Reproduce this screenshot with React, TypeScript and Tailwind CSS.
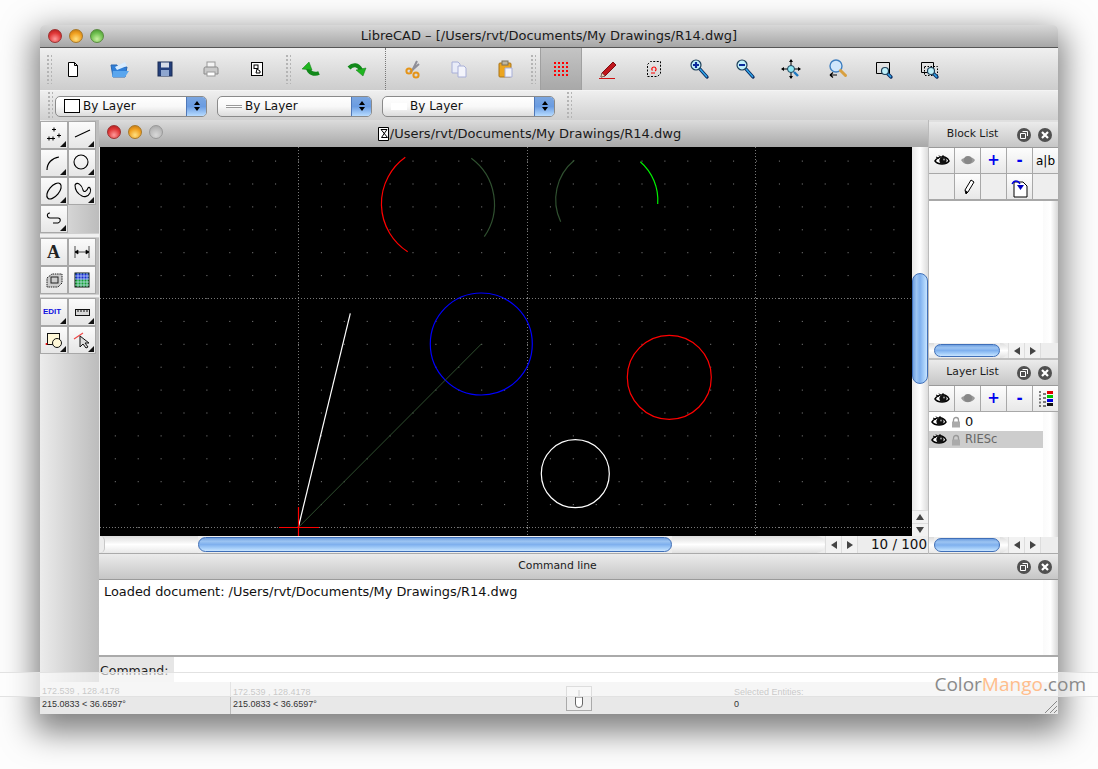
import React from "react";

const Svg = ({ size = 24, children }: { size?: number; children: React.ReactNode }) => (
  <svg width={size} height={size} viewBox={`0 0 ${size} ${size}`} fill="none" className="block">
    {children}
  </svg>
);

const Corner = () => <path d="M25 25h-6l6-6z" fill="#111" />;

const Lens = ({ cx = 9, cy = 8, r = 5, fill = "#bff0fa" }: { cx?: number; cy?: number; r?: number; fill?: string }) => (
  <g>
    <path d={`M${cx + r * 0.7} ${cy + r * 0.7}L20 20`} stroke="#0b2b60" strokeWidth="3.4" strokeLinecap="round" />
    <path d={`M${cx + r * 0.8} ${cy + r * 0.8}L19.6 19.6`} stroke="#2fa3e8" strokeWidth="1.5" strokeLinecap="round" />
    <circle cx={cx} cy={cy} r={r} fill={fill} stroke="#1d3f58" strokeWidth="1.2" />
  </g>
);

const toolIcons: Record<string, React.ReactNode> = {
  new: <path d="M7.5 5.5h6l3 3v11h-9z M13.5 5.5v3h3" fill="#fff" stroke="#000" />,
  open: (
    <g>
      <path d="M4 8h6l1 2h9l-2 10H6z" fill="#2f7fd8" stroke="#2a66b0" />
      <path d="M8 10l10-5 2 4-10 4z" fill="#d8ecff" />
      <path d="M6 14h16l-4 6H5z" fill="#5aa6ee" />
    </g>
  ),
  save: (
    <g>
      <rect x="5" y="5" width="14" height="14" fill="#24407c" stroke="#1a2c55" />
      <rect x="8" y="5.500" width="8" height="5" fill="#d6dce8" />
      <rect x="8" y="13" width="8" height="6" fill="#8ea6cf" />
    </g>
  ),
  print: (
    <g>
      <rect x="8" y="5" width="8" height="6" fill="#f4f4f4" stroke="#999" />
      <path d="M5 12c0-2 1-2 2-2h10c1 0 2 0 2 2v5H5z" fill="#c9c9c9" stroke="#8a8a8a" />
      <rect x="8" y="15" width="8" height="4" fill="#fff" stroke="#999" />
    </g>
  ),
  preview: (
    <g>
      <rect x="6.500" y="5.500" width="11" height="13" fill="#fff" stroke="#000" />
      <rect x="9" y="8" width="4" height="3.500" stroke="#000" fill="#fff" />
      <path d="M12 12l3 2v2h-4z" stroke="#000" fill="#fff" />
    </g>
  ),
  undo: (
    <g>
      <path d="M9 11c1 5 6 7 11 5" stroke="#11881a" strokeWidth="4" />
      <path d="M3 12l7-7 3 8z" fill="#1fb51f" stroke="#0e7a14" strokeWidth=".5" />
    </g>
  ),
  redo: (
    <g>
      <path d="M4 11c4-4 9-4 12 2" stroke="#11881a" strokeWidth="4" />
      <path d="M11 13l10-2-3 8z" fill="#1fb51f" stroke="#0e7a14" strokeWidth=".5" />
    </g>
  ),
  cut: (
    <g>
      <path d="M16 4l-5 10M18 7l-9 8" stroke="#8f8f98" strokeWidth="2" />
      <circle cx="8" cy="14" r="2.600" stroke="#e59418" strokeWidth="2" />
      <circle cx="15" cy="18" r="2.600" stroke="#e59418" strokeWidth="2" />
    </g>
  ),
  copy: (
    <g>
      <path d="M5 5h6l2 2v9H5z" fill="#e9ecf8" stroke="#a8afd8" />
      <path d="M11 9h6l2 2v9h-8z" fill="#f3f4fb" stroke="#a8afd8" />
    </g>
  ),
  paste: (
    <g>
      <rect x="6" y="6" width="12" height="14" rx="1" fill="#eca51f" stroke="#a8741a" />
      <rect x="9" y="4" width="6" height="4" fill="#bfb7a0" stroke="#7a705a" />
      <path d="M12 11h7v9h-7z" fill="#f2f3fa" stroke="#a8afd8" />
    </g>
  ),
  grid: (
    <g fill="#f00">
      {[6, 10, 14, 18].map((x) =>
        [6, 10, 14, 18].map((y) => <rect key={`${x}-${y}`} x={x - 1} y={y - 1} width="2" height="2" />)
      )}
    </g>
  ),
  draft: (
    <g>
      <path d="M7 16L18 5l3 3-11 11-4 1z" fill="#c0161c" stroke="#7c0d10" />
      <path d="M6 20l1-4 3 3z" fill="#f0d8b8" stroke="#555" strokeWidth=".5" />
      <path d="M4 21.500h16" stroke="#d01010" strokeWidth="1.200" />
    </g>
  ),
  redraw: (
    <g>
      <path d="M6.500 7.500l3-3h10v12l-3 3H6.500z" stroke="#000" strokeDasharray="2 1.500" />
      <path d="M14 14c2-1 1-4-1-4s-3 2-1.500 3.500M10 16h4" stroke="#f00" strokeWidth="1.200" />
    </g>
  ),
  zoomIn: (
    <g>
      <Lens />
      <path d="M6 8h6M9 5v6" stroke="#0a2a9c" strokeWidth="2.200" />
    </g>
  ),
  zoomOut: (
    <g>
      <Lens />
      <path d="M6 8h6" stroke="#0a2a9c" strokeWidth="2.200" />
    </g>
  ),
  zoomAuto: (
    <g>
      <path d="M12 3v18M3 12h18" stroke="#000" />
      <path d="M12 2l-2 3h4zM12 22l-2-3h4zM2 12l3-2v4zM22 12l-3-2v4z" fill="#000" />
      <circle cx="12" cy="12" r="3.500" fill="#8fe8f4" stroke="#1d3f58" />
      <path d="M15 15l4 4" stroke="#1c78c0" strokeWidth="2.400" />
    </g>
  ),
  zoomPrev: (
    <g>
      <circle cx="11" cy="9" r="6" fill="#cfe6fb" stroke="#3f7fc0" strokeWidth="1.400" />
      <path d="M15.500 13.500l5 5" stroke="#d8a040" strokeWidth="3" strokeLinecap="round" />
      <path d="M12 18H5M5 18l3-2.500M5 18l3 2.500" stroke="#000" strokeWidth="1.200" />
    </g>
  ),
  zoomWin: (
    <g>
      <path d="M5.500 5.500h13v11h-13z" stroke="#000" fill="none" />
      <Lens cx={14} cy={14} r={3.500} />
    </g>
  ),
  zoomPan: (
    <g>
      <path d="M4.500 5.500h12v10h-12z" stroke="#000" />
      <path d="M7.500 9.500h13v9h-13z" stroke="#000" strokeDasharray="1.500 1.500" />
      <Lens cx={14} cy={14} r={3.500} />
    </g>
  ),
};

const boxIcons: Record<string, React.ReactNode> = {
  point: (
    <g>
      {[[13, 7], [18, 13], [12, 16], [8, 16]].map(([x, y]) => (
        <path key={`${x}${y}`} d={`M${x - 2} ${y + 0.5}h4M${x} ${y - 1.5}v4`} stroke="#000" strokeWidth="1" />
      ))}
    </g>
  ),
  line: <path d="M6 15l15-7" stroke="#000" strokeWidth="1.100" />,
  arc: <path d="M6 20c0-7 5-12 12-13" stroke="#000" strokeWidth="1.200" />,
  circle: <circle cx="12" cy="12" r="7" stroke="#000" strokeWidth="1.100" />,
  ellipse: <ellipse cx="13" cy="13" rx="5" ry="9.500" transform="rotate(40 13 13)" stroke="#000" strokeWidth="1.200" />,
  spline: <path d="M6 7c2-4 7 0 8 5 1 3 4 1 5-2 1-2 4 1 2 5-2 4-6 4-8 3-4-2-7-5-7-11z" stroke="#000" strokeWidth="1.100" />,
  poly: <path d="M9 7c-4 0-3 5 0 5h8c3 0 3 4 0 5h-5" stroke="#000" strokeWidth="1.100" />,
  text: <text x="6" y="19" fontSize="18" fontWeight="700" fontFamily="'Liberation Serif',serif" fill="#222">A</text>,
  dim: <path d="M6 7v12M20 7v12M6 13h14M6 13l3-2v4zM20 13l-3-2v4z" stroke="#000" fill="#000" strokeWidth=".7" />,
  hatch: (
    <g>
      <path d="M6 11l5-4h10v9l-4 4H6z" fill="#ccc" stroke="#222" strokeDasharray="1.500 .8" />
      <rect x="10" y="10" width="7" height="6" stroke="#222" />
    </g>
  ),
  image: (
    <g>
      <rect x="6" y="6" width="14" height="14" fill="#16a030" stroke="#111" />
      <rect x="6.500" y="6.500" width="13" height="6" fill="#1a2ad0" />
      <path d="M9 6v14M12 6v14M15 6v14M18 6v14M6 9h14M6 12h14M6 15h14M6 18h14" stroke="#d0e8ff" strokeWidth=".7" />
    </g>
  ),
  edit: <text x="2" y="15" fontSize="8" fontWeight="700" fontFamily="'Liberation Sans',sans-serif" fill="#1010e0">EDIT</text>,
  measure: (
    <g>
      <rect x="6.500" y="10.500" width="14" height="6" fill="#d8d8d8" stroke="#111" />
      <path d="M9 11v2M12 11v2M15 11v2M18 11v2" stroke="#111" />
    </g>
  ),
  snap: (
    <g>
      <rect x="6.500" y="6.500" width="12" height="11" fill="#fff8d8" stroke="#111" />
      <circle cx="16" cy="16" r="4.500" fill="#fff8d8" stroke="#111" />
      <circle cx="5.500" cy="17" r="1" fill="#e00" />
    </g>
  ),
  select: (
    <g>
      <path d="M5 12l9-6" stroke="#e44" strokeWidth="1.200" />
      <path d="M11 9v11l3-3 3 4 2-1-3-4h4z" fill="#ddd" stroke="#111" />
    </g>
  ),
};

const Eye = ({ off }: { off?: boolean }) =>
  off ? (
    <Svg size={18}>
      <path d="M2 8c3-3 11-4 14 0-2 5-11 6-14 0z" fill="#9a9a9a" />
      <circle cx="9" cy="8" r="4" fill="#888" />
    </Svg>
  ) : (
    <Svg size={18}>
      <path d="M2 9c3-5 11-6 14 0-3 4-11 4-14 0z" fill="#fff" stroke="#000" strokeWidth="1.500" />
      <path d="M3 5l3 1.500M6 3.500l2 2M10 3l0 2" stroke="#000" />
      <circle cx="10" cy="8.500" r="3.600" fill="#111" />
      <circle cx="11" cy="7.500" r="1" fill="#999" />
    </Svg>
  );

const dockIcons: Record<string, React.ReactNode> = {
  eye: <Eye />,
  eyeOff: <Eye off />,
  plus: <span className="text-[15px] font-bold leading-none text-[#0000ee]">+</span>,
  minus: <span className="text-[15px] font-bold leading-none text-[#0000ee]">-</span>,
  rename: <span className="text-[12px] leading-none text-black">a|b</span>,
  pen: (
    <Svg size={18}>
      <path d="M7 16l-1-4 6-10 3 2-6 10z" fill="#fff" stroke="#000" />
      <path d="M7 16l-1-4 3 2z" fill="#000" />
    </Svg>
  ),
  insert: (
    <Svg size={22}>
      <path d="M5 6h9l4 4v11H5z" fill="#fff" stroke="#000" />
      <path d="M3 8c2-4 6-4 8 0" stroke="#0000e0" strokeWidth="1.300" />
      <path d="M8 9h7l-3.500 5z" fill="#0000c0" />
    </Svg>
  ),
  layers: (
    <Svg size={22}>
      <path d="M5 3v16" stroke="#000" strokeDasharray="2 1.500" />
      <path d="M8 6h3M8 10h3M8 14h3M8 18h3" stroke="#000" />
      <rect x="12" y="3" width="6" height="3" fill="#e00000" />
      <rect x="12" y="7" width="6" height="3" fill="#00c000" />
      <rect x="12" y="11" width="6" height="3" fill="#0000e0" />
      <rect x="12" y="15" width="6" height="3" fill="#111" />
    </Svg>
  ),
};

const Light = ({ color }: { color: string }) => {
  const cls: Record<string, string> = {
    red: "bg-[radial-gradient(circle_at_50%_75%,#ff9a9a,#e03838_55%,#a81818)] border-[#9c3030]",
    yellow: "bg-[radial-gradient(circle_at_50%_75%,#ffe080,#f0a020_55%,#b87010)] border-[#a87828]",
    green: "bg-[radial-gradient(circle_at_50%_75%,#c8f0a0,#70c050_55%,#3f8a28)] border-[#5a8a40]",
    gray: "bg-[radial-gradient(circle_at_50%_75%,#d8d8d8,#bcbcbc_55%,#a0a0a0)] border-[#999]",
  };
  return <div className={`w-[14px] h-[14px] rounded-full border ${cls[color]}`} />;
};

const Handle = ({ className = "" }: { className?: string }) => (
  <div className={`w-[6px] h-[30px] shrink-0 bg-[radial-gradient(circle,#b4b4b4_1px,transparent_1.4px)] bg-[length:4px_4px] ${className}`} />
);

const ToolBtn = ({ name, active }: { name: string; active?: boolean }) => (
  <div
    className={`h-full shrink-0 flex items-center justify-center ${
      active ? "w-[42px] mr-[2px] bg-gradient-to-b from-[#c4c4c4] to-[#a8a8a8] border-x border-[#a0a0a0]" : "w-[46px]"
    }`}
  >
    <Svg>{toolIcons[name]}</Svg>
  </div>
);

const Combo = ({ w, swatch }: { w: string; swatch: React.ReactNode }) => (
  <div className={`${w} h-[21px] shrink-0 flex rounded-[5px] border border-[#8a8a8a] overflow-hidden bg-gradient-to-b from-white via-[#f8f8f8] to-[#dcdcdc]`}>
    <div className="flex-1 flex items-center pl-[8px] gap-[3px] text-[12px] text-[#111]">
      {swatch}
      <span>By Layer</span>
    </div>
    <div className="w-[20px] flex flex-col items-center justify-center gap-[2px] border-l border-[#4f78b8] bg-gradient-to-b from-[#7ba6e0] via-[#6a9ce2] to-[#b8dcff]">
      <div className="w-0 h-0 border-x-[3px] border-x-transparent border-b-[4px] border-b-black" />
      <div className="w-0 h-0 border-x-[3px] border-x-transparent border-t-[4px] border-t-black" />
    </div>
  </div>
);

const Box = ({ name }: { name: string }) => (
  <div className="w-[26px] h-[26px] bg-gradient-to-b from-[#fbfbfb] to-[#e6e6e6] outline outline-1 outline-[#a8a8a8]">
    <Svg size={26}>
      {boxIcons[name]}
      {!["text", "dim", "hatch", "image"].includes(name) && <Corner />}
    </Svg>
  </div>
);

const Arrow = ({ dir }: { dir: "l" | "r" | "u" | "d" }) => {
  const cls = {
    l: "border-y-[4px] border-y-transparent border-r-[6px] border-r-[#444]",
    r: "border-y-[4px] border-y-transparent border-l-[6px] border-l-[#444]",
    u: "border-x-[4px] border-x-transparent border-b-[6px] border-b-[#444]",
    d: "border-x-[4px] border-x-transparent border-t-[6px] border-t-[#444]",
  }[dir];
  return <div className={`w-0 h-0 ${cls}`} />;
};

const thumbH =
  "rounded-full border border-[#3f6fb8] bg-[linear-gradient(to_bottom,#6f9fe0,#9cc4f2_25%,#7fb0ee_50%,#a8d0fa_80%,#c8e4ff)]";

const HScroll = ({ lead, thumb, rest, cap }: { lead: string; thumb: string; rest: string; cap?: boolean }) => (
  <div className="flex h-full items-stretch bg-[#ededed]">
    <div className={`${lead} shrink-0 flex bg-gradient-to-b from-[#dcdcdc] via-white to-[#e8e8e8]`}>
      {cap && <div className="w-[5px] shrink-0 bg-[#ededed] rounded-r-full border-r border-[#c8c8c8]" />}
    </div>
    <div className={`${thumb} shrink-0 my-[1px] ${thumbH}`} />
    <div className={`${rest} shrink-0 rounded-r-full bg-gradient-to-b from-[#dcdcdc] via-white to-[#e0e0e0]`} />
    <div className="w-[17px] shrink-0 flex items-center justify-center border-x border-[#ddd] bg-[#f2f2f2]"><Arrow dir="l" /></div>
    <div className="w-[16px] shrink-0 flex items-center justify-center border-r border-[#ddd] bg-[#f2f2f2]"><Arrow dir="r" /></div>
  </div>
);

const VBar = ({ className = "" }: { className?: string }) => (
  <div className={`w-[15px] shrink-0 bg-gradient-to-r from-[#fafafa] via-white to-[#d8d8d8] ${className}`} />
);

const DockHead = ({ title }: { title: string }) => (
  <div className="h-[26px] shrink-0 flex items-center bg-gradient-to-b from-[#ebebeb] to-[#c6c6c6] border-b border-[#9a9a9a]">
    <div className="flex-1 text-center text-[10.800px] text-[#1a1a1a]">{title}</div>
    <div className="w-[42px] shrink-0 flex gap-[7px] pl-[1px]">
      <div className="w-[14px] h-[14px] rounded-full bg-[#505050] flex items-center justify-center">
        <svg width="10" height="10" viewBox="0 0 10 10" fill="none">
          <path d="M3.500 1.500h5v4.500M1.500 3.500h5v5h-5z" stroke="#fff" />
        </svg>
      </div>
      <div className="w-[14px] h-[14px] rounded-full bg-[#505050] flex items-center justify-center">
        <svg width="10" height="10" viewBox="0 0 10 10" fill="none">
          <path d="M2 2l6 6M8 2l-6 6" stroke="#fff" strokeWidth="2.200" />
        </svg>
      </div>
    </div>
  </div>
);

const DockBtn = ({ icon, flat }: { icon?: string; flat?: boolean }) => (
  <div className={`h-[25px] flex items-center justify-center overflow-hidden ${flat ? "bg-[#eeeeee]" : "bg-gradient-to-b from-[#fdfdfd] to-[#e8e8e8]"}`}>
    {icon && dockIcons[icon]}
  </div>
);

const Lock = () => (
  <svg width="10" height="12" viewBox="0 0 10 12" fill="none">
    <path d="M2.500 6V4a2.500 2.500 0 015 0v2" stroke="#999" strokeWidth="1.300" />
    <rect x="1" y="5.500" width="8" height="6" fill="#aaa" />
  </svg>
);

const Canvas = () => {
  const dots: React.ReactNode[] = [];
  for (let i = -8; i < 28; i++) {
    for (let j = -16; j < 2; j++) {
      dots.push(<rect key={`${i}:${j}`} x={298 + i * 22.9} y={527 + j * 22.9} width="1" height="1" fill="#8a8a8a" />);
    }
  }
  return (
    <svg width="812" height="389" viewBox="100 147 812 389" className="block bg-black" fill="none">
      {dots}
      <g stroke="#777" strokeDasharray="1 2">
        <path d="M298.500 147V536M527.500 147V536M755.500 147V536" />
        <path d="M100 298.500H912M100 527.500H912" />
      </g>
      <path d="M405.300 157.300A57 57 0 00407.700 251.700" stroke="#f00" strokeWidth="1.200" />
      <path d="M471.300 158.300A57 57 0 01484.300 236.700" stroke="#2f4f2f" strokeWidth="1.200" />
      <path d="M574.300 160.300A51 51 0 00560.700 221.700" stroke="#2f4f2f" strokeWidth="1.200" />
      <path d="M640.300 161.700A51 51 0 01657.700 204" stroke="#00f000" strokeWidth="1.200" />
      <circle cx="481.300" cy="344" r="51" stroke="#0000ff" strokeWidth="1.200" />
      <circle cx="669.300" cy="377.300" r="42" stroke="#f00" strokeWidth="1.200" />
      <circle cx="575.300" cy="473.700" r="34" stroke="#fff" strokeWidth="1.200" />
      <path d="M298.300 527.500L350.300 313.300" stroke="#fff" strokeWidth="1.200" />
      <path d="M298.300 527.500L481.300 344" stroke="#2f4f2f" />
      <path d="M279 527.500H319M298.500 507V536" stroke="#f00" strokeWidth="1.200" />
    </svg>
  );
};

const TOOLBOX = [
  ["point", "line", "arc", "circle", "ellipse", "spline", "poly"],
  ["text", "dim", "hatch", "image"],
  ["edit", "measure", "snap", "select"],
];

export default function App() {
  return (
    <div className="relative w-[1098px] h-[769px] overflow-hidden bg-[#fdfdfd] pt-[25px] pl-[40px] [font-family:'DejaVu_Sans',sans-serif]">
      <div className="w-[1018px] h-[689px] flex flex-col rounded-t-[5px] overflow-hidden shadow-[0_12px_32px_6px_rgba(0,0,0,0.5)] bg-[#e8e8e8]">
        <div className="h-[23px] shrink-0 relative flex items-center justify-center bg-gradient-to-b from-[#d8d8d8] to-[#a6a6a6] border-b border-[#555] text-[13px] text-[#1a1a1a]">
          <div className="absolute left-[8px] top-[4px] flex gap-[7px]">
            <Light color="red" />
            <Light color="yellow" />
            <Light color="green" />
          </div>
          LibreCAD – [/Users/rvt/Documents/My Drawings/R14.dwg]
        </div>

        <div className="h-[43px] shrink-0 flex items-center pl-[6px] bg-gradient-to-b from-[#f0f0f0] to-[#cdcdcd] border-b border-[#f4f4f4]">
          <Handle className="-mr-[2px]" />
          {["new", "open", "save", "print", "preview"].map((n) => <ToolBtn key={n} name={n} />)}
          <Handle className="ml-[5px] -mr-[3px]" />
          {["undo", "redo"].map((n) => <ToolBtn key={n} name={n} />)}
          <div className="w-[10px] h-full shrink-0 flex justify-center">
            <div className="h-full border-l border-dotted border-[#777]" />
          </div>
          {["cut", "copy", "paste"].map((n) => <ToolBtn key={n} name={n} />)}
          <Handle className="ml-[2px] mr-[4px]" />
          <ToolBtn name="grid" active />
          {["draft", "redraw", "zoomIn", "zoomOut", "zoomAuto", "zoomPrev", "zoomWin", "zoomPan"].map((n) => <ToolBtn key={n} name={n} />)}
        </div>

        <div className="h-[29px] shrink-0 flex items-center pl-[7px] pt-[1px] bg-gradient-to-b from-[#efefef] to-[#d0d0d0]">
          <Handle className="h-[22px]" />
          <div className="w-[2px] shrink-0" />
          <Combo w="w-[152px]" swatch={<div className="w-[16px] h-[14px] bg-white border border-black" />} />
          <div className="w-[10px] shrink-0" />
          <Combo w="w-[155px]" swatch={<div className="w-[16px] h-[3px] border-y border-[#999] bg-white" />} />
          <div className="w-[10px] shrink-0" />
          <Combo w="w-[173px]" swatch={<div className="w-[16px] h-[7px] bg-white" />} />
          <Handle className="h-[22px] ml-[11px]" />
        </div>

        <div className="h-[562px] shrink-0 flex">
          <div className="w-[59px] shrink-0 flex flex-col pl-[1px] pt-[2px] bg-gradient-to-r from-[#ececec] to-[#bcbcbc]">
            {TOOLBOX.map((group, i) => (
              <React.Fragment key={i}>
                <div className="grid grid-cols-[26px_26px] gap-[2px]">
                  {group.map((n) => <Box key={n} name={n} />)}
                </div>
                {i < 2 && <div className={`${i === 0 ? "h-[5px] mt-[1px]" : "h-[4px] mt-[1px]"} mb-[1px] -ml-[1px] border-y border-[#d0d0d0] bg-[#f0f0f0]`} />}
              </React.Fragment>
            ))}
          </div>

          <div className="flex-1 flex flex-col min-w-0">
            <div className="h-[434px] shrink-0 flex">
              <div className="w-[829px] shrink-0 flex flex-col">
                <div className="h-[27px] shrink-0 relative flex items-center justify-center pl-[32px] bg-gradient-to-b from-[#dcdcdc] to-[#a8a8a8] text-[13px] text-[#1a1a1a]">
                  <div className="absolute left-[8px] top-[5px] flex gap-[7px]">
                    <Light color="red" />
                    <Light color="yellow" />
                    <Light color="gray" />
                  </div>
                  <svg width="12" height="15" viewBox="0 0 12 15" fill="none">
                    <path d="M.5 1.500h10v13H.5z" fill="#fff" stroke="#000" />
                    <path d="M3 3.500h6l-5.500 8h6z" stroke="#000" />
                  </svg>
                  /Users/rvt/Documents/My Drawings/R14.dwg
                </div>
                <div className="h-[389px] shrink-0 flex">
                  <div className="pl-[1px]">
                    <Canvas />
                  </div>
                  <div className="w-[16px] shrink-0 flex flex-col bg-gradient-to-r from-[#e8e8e8] via-white to-[#dcdcdc]">
                    <div className="h-[126px] shrink-0" />
                    <div className="h-[111px] shrink-0 rounded-full border border-[#3f6fb8] bg-[linear-gradient(to_right,#6f9fe0,#9cc4f2_25%,#7fb0ee_50%,#a8d0fa_80%,#c8e4ff)]" />
                    <div className="flex-1" />
                    <div className="h-[13px] shrink-0 flex items-center justify-center border-t border-[#ddd] bg-[#f2f2f2]"><Arrow dir="u" /></div>
                    <div className="h-[13px] shrink-0 flex items-center justify-center border-t border-[#ddd] bg-[#f2f2f2]"><Arrow dir="d" /></div>
                  </div>
                </div>
                <div className="h-[18px] shrink-0 flex border-b border-[#aaa]">
                  <div className="w-[759px] shrink-0 pl-[1px]">
                    <HScroll lead="w-[98px]" thumb="w-[474px]" rest="w-[153px]" cap />
                  </div>
                  <div className="flex-1 text-right pr-[1px] text-[13.500px] leading-[17px] text-[#111] bg-[#ededed] whitespace-nowrap">10 / 100</div>
                </div>
              </div>

              <div className="flex-1 min-w-0 flex flex-col border-l border-[#bbb] bg-white">
                <div className="h-[2px] shrink-0 bg-[#e0e0e0]" />
                <DockHead title="Block List" />
                <div className="grid grid-cols-5 gap-[1px] bg-[#a8a8a8] border-b border-[#a8a8a8] shrink-0 pb-[1px]">
                  {["eye", "eyeOff", "plus", "minus", "rename"].map((n) => <DockBtn key={n} icon={n} />)}
                  <DockBtn flat />
                  <DockBtn icon="pen" />
                  <DockBtn flat />
                  <DockBtn icon="insert" />
                  <DockBtn flat />
                </div>
                <div className="h-[142px] shrink-0 flex">
                  <div className="flex-1" />
                  <VBar />
                </div>
                <div className="h-[15px] shrink-0">
                  <HScroll lead="w-[5px]" thumb="w-[66px]" rest="w-[8px]" />
                </div>
                <div className="h-[2px] shrink-0 bg-[#c0c0c0]" />
                <DockHead title="Layer List" />
                <div className="grid grid-cols-5 gap-[1px] bg-[#a8a8a8] border-b border-[#a8a8a8] shrink-0">
                  <DockBtn icon="eye" />
                  <DockBtn icon="eyeOff" />
                  <DockBtn icon="plus" />
                  <DockBtn icon="minus" />
                  <DockBtn icon="layers" />
                </div>
                <div className="flex-1 min-h-0 flex">
                  <div className="flex-1 flex flex-col pt-[1px] text-[11.500px]">
                    <div className="h-[18px] flex items-center gap-[3px] pl-[1px] text-[#111]">
                      <Eye />
                      <Lock />
                      <span className="ml-[1px] text-[13px]">0</span>
                    </div>
                    <div className="h-[17px] flex items-center gap-[3px] pl-[1px] bg-[#cdcdcd] text-[#666]">
                      <Eye />
                      <Lock />
                      <span className="ml-[1px]">RIESc</span>
                    </div>
                  </div>
                  <VBar />
                </div>
                <div className="h-[17px] shrink-0 border-b border-[#aaa]">
                  <HScroll lead="w-[5px]" thumb="w-[66px]" rest="w-[8px]" />
                </div>
              </div>
            </div>

            <DockHead title="Command line" />
            <div className="h-[77px] shrink-0 flex bg-white border-b-2 border-[#aaa]">
              <div className="flex-1 pl-[5px] pt-[2px] text-[12.900px] text-[#111]">Loaded document: /Users/rvt/Documents/My Drawings/R14.dwg</div>
              <VBar />
            </div>
            <div className="flex-1 flex bg-white">
              <div className="w-[75px] pl-[1px] pt-[5px] text-[12.500px] bg-[#e6e6e6] text-[#222]">Command:</div>
            </div>
          </div>
        </div>

        <div className="flex-1 relative flex flex-col [font-family:'Liberation_Sans',sans-serif] text-[9px] bg-[#e8e8e8]">
          <div className="h-[15px] shrink-0 flex items-end leading-[10px] text-[#777]">
            <div className="w-[191px] pl-[2px] border-r border-[#bbb] h-full pt-[4px]">172.539 , 128.4178</div>
            <div className="w-[503px] pl-[2px] pt-[4px]">172.539 , 128.4178</div>
            <div className="pt-[4px]">Selected Entities:</div>
          </div>
          <div className="h-[17px] shrink-0 flex leading-[14px] text-[#333]">
            <div className="w-[191px] pl-[2px] border-r border-[#bbb]">215.0833 &lt; 36.6597°</div>
            <div className="w-[503px] pl-[2px]">215.0833 &lt; 36.6597°</div>
            <div>0</div>
          </div>
          <div className="absolute left-[526px] top-[4px] w-[26px] h-[25px] flex items-center justify-center border border-[#aaa] bg-[#f0f0f0]/60">
            <svg width="14" height="20" viewBox="0 0 14 20" fill="none">
              <path d="M7 1v7" stroke="#888" />
              <path d="M3.500 8h7v7a3.500 3.500 0 01-7 0z" fill="#fff" stroke="#666" />
            </svg>
          </div>
          <svg className="absolute right-0 bottom-0" width="14" height="14" viewBox="0 0 14 14" fill="none">
            <path d="M1 13L13 1M6 13l7-7M10 13l3-3" stroke="#888" />
          </svg>
        </div>
      </div>

      <div className="absolute left-0 top-[672px] w-[1098px] h-[25px] flex justify-end items-center pr-[12px] bg-white/60 border-y border-[#e2e2e2] text-[19px] [font-family:'Open_Sans',sans-serif] text-[#8a8a8a]">
        <span>Color</span>
        <span className="text-[#ffbd8c]">Mango</span>
        <span>.com</span>
      </div>
    </div>
  );
}
